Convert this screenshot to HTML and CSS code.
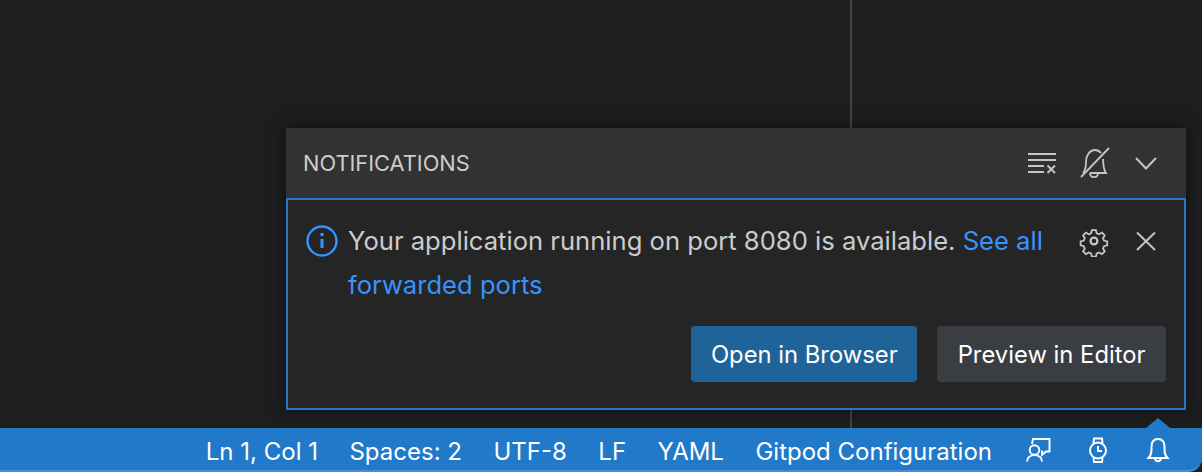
FILE: index.html
```html
<!DOCTYPE html>
<html lang="en">
<head>
<meta charset="utf-8">
<title>Notifications</title>
<link rel="stylesheet" href="styles.css">
</head>
<body>
<div class="window">
  <main class="editor">
    <div class="sash"></div>
    <section class="center">
      <header class="center-header">
        <span class="center-title">NOTIFICATIONS</span>
        <div class="header-actions">
          <svg class="ico" viewBox="0 0 32 32" fill="none" stroke="#c5c5c5" stroke-width="2"><path d="M2 7h28M2 13h28M2 19h16M2 25h16M21.500 18.500l7.500 7.500M29 18.500l-7.500 7.500"/></svg>
          <svg class="ico" viewBox="0 0 32 32" fill="none" stroke="#c5c5c5" stroke-width="1.800"><path d="M5 26c3-3 3-7 3-11 0-7 4-12 9-12 2.500 0 4.500 1 6 3M25 12c.5 5 0 10 3 14H12M12 26c0 5.500 8 5.500 8 0M3 30 31 1"/></svg>
          <svg class="ico" viewBox="0 0 32 32" fill="none" stroke="#c5c5c5" stroke-width="2"><path d="M6 11l10 10.500L26 11"/></svg>
        </div>
      </header>
      <div class="toast">
        <div class="toast-row">
          <svg class="info" viewBox="0 0 32 32" fill="none" stroke="#3794ff" stroke-width="2.400"><circle cx="16" cy="16" r="14.500"/><path d="M16 14v9" stroke-width="3"/><circle cx="16" cy="9.500" r="1.800" fill="#3794ff" stroke="none"/></svg>
          <p class="message">Your application running on port 8080 is available. <a class="link">See all forwarded ports</a></p>
          <div class="toast-actions">
            <svg class="ico" viewBox="0 0 32 32" fill="none" stroke="#c5c5c5" stroke-width="2.300"><path d="M13.500 2.500h5l1 4 3 1.200 3.500-2.100 3.500 3.500-2.100 3.500 1.200 3 4 1v5l-4 1-1.200 3 2.100 3.500-3.500 3.500-3.500-2.100-3 1.200-1 4h-5l-1-4-3-1.200-3.500 2.100-3.500-3.500 2.100-3.500-1.200-3-4-1v-5l4-1 1.200-3-2.100-3.500 3.500-3.500 3.500 2.100 3-1.200z" transform="translate(3.100 3.100) scale(.8)"/><circle cx="16" cy="16" r="3.400"/></svg>
            <svg class="ico" viewBox="0 0 32 32" fill="none" stroke="#c5c5c5" stroke-width="2"><path d="M7 7.500l18 17.500M25 7.500L7 25"/></svg>
          </div>
        </div>
        <div class="buttons">
          <button class="btn primary">Open in Browser</button>
          <button class="btn secondary">Preview in Editor</button>
        </div>
      </div>
    </section>
    <div class="beak"></div>
  </main>
  <footer class="status">
    <div class="status-items">
      <span>Ln 1, Col 1</span>
      <span>Spaces: 2</span>
      <span>UTF-8</span>
      <span>LF</span>
      <span>YAML</span>
      <span>Gitpod Configuration</span>
    </div>
    <div class="status-icons">
      <svg class="sico" viewBox="0 0 28 28" fill="none" stroke="#fff" stroke-width="1.900"><path d="M8 7l1-5h16.500v12.500H22L18 18v-3.500h-1"/><circle cx="10.500" cy="13" r="4.800"/><path d="M3 24.500c0-8.500 15-8.500 15 0"/></svg>
      <svg class="sico" viewBox="0 0 28 28" fill="none" stroke="#fff" stroke-width="2"><circle cx="14" cy="13.500" r="8"/><path d="M9.500 6.500 10 1.500h8l.5 5M9.500 20.500l.5 4.500h8l.5-4.500M14 9v5h4"/></svg>
      <svg class="sico" viewBox="0 0 28 28" fill="none" stroke="#fff" stroke-width="2"><path d="M4.500 21c2-2 3-4 3-8v-3C7.500 5 10 2 14 2s6.500 3 6.500 8v3c0 4 1 6 3 8zM11 21c0 4.200 6 4.200 6 0"/></svg>
    </div>
  </footer>
</div>
</body>
</html>
```
FILE: styles.css
```css
* { box-sizing: border-box; }
html, body { margin: 0; height: 100%; background: #1e1e1e; }
body { font-family: Inter, "Liberation Sans", sans-serif; overflow: hidden; }
.window { height: 472px; display: flex; flex-direction: column; position: relative; }
.editor { flex: 1; position: relative; background: #1e1e1e; }
.sash { position: absolute; left: 850px; top: 0; bottom: 0; width: 2px; background: #444; }
.center { position: absolute; left: 286px; top: 128px; width: 900px; height: 282px; display: flex; flex-direction: column; box-shadow: 0 0 16px rgba(0,0,0,.5); }
.center-header { height: 70px; background: #323233; display: flex; align-items: center; justify-content: space-between; padding: 0 24px 0 17px; }
.center-title { color: #ccc; font-size: 21.800px; line-height: 24px; }
.header-actions { display: flex; align-items: center; gap: 20px; }
.ico { width: 32px; height: 32px; display: block; }
.toast { flex: 1; background: #252526; border: 2px solid #2179c9; padding: 25px 18px 26px 18px; display: flex; flex-direction: column; justify-content: space-between; }
.toast-row { display: flex; align-items: flex-start; }
.info { width: 32px; height: 32px; flex: none; margin: 0 10px 0 0; }
.message { margin: -6px 0 0; flex: 1; color: #ccc; font-size: 25.600px; line-height: 44px; }
.link { color: #3794ff; }
.toast-actions { display: flex; align-items: center; margin: 0 0 0 18px; gap: 20px; flex: none; padding-right: 4px; }
.buttons { display: flex; justify-content: flex-end; gap: 20px; }
.btn { height: 56px; border: 0; border-radius: 4px; color: #fff; font: 23.800px Inter, "Liberation Sans", sans-serif; }
.primary { background: #1f6398; padding: 0 19.500px; }
.secondary { background: #3a3d41; padding: 0 20.500px; }
.beak { position: absolute; left: 1146px; bottom: 0; width: 0; height: 0; border: solid transparent; border-width: 0 12px 10px; border-bottom-color: #2179c9; }
.status { height: 44px; background: #2179c9; border-bottom: 2px solid #4a90d0; color: #fff; font-size: 24px; display: flex; align-items: center; justify-content: flex-end; gap: 32px; padding: 4px 30px 0 0; border-bottom-right-radius: 14px; }
.status-items { display: flex; gap: 31.500px; }
.status-icons { display: flex; gap: 32px; }
.sico { width: 28px; height: 28px; display: block; }
```
